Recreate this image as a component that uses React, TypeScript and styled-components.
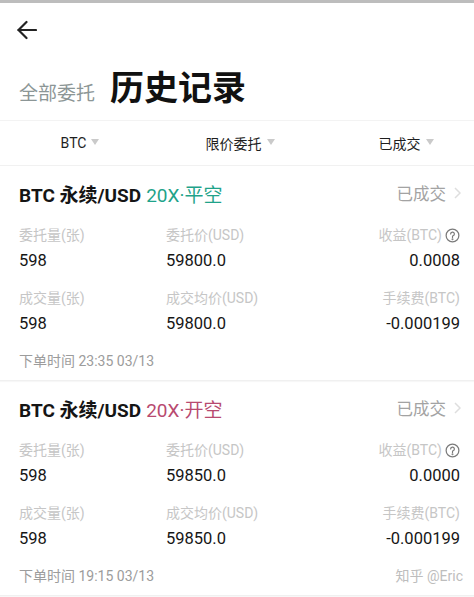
import React from 'react';
import styled, { createGlobalStyle } from 'styled-components';

const GlobalStyle = createGlobalStyle`
    html, body {
        margin: 0;
        padding: 0;
        background: #ffffff;
    }
    body {
        font-family: "Roboto", "Noto Sans CJK SC", sans-serif;
        color: #1a1a1a;
        width: 474px;
        height: 597px;
        overflow: hidden;
    }
`;

interface Order {
    pair: string;
    tag: string;
    side: 'close' | 'open';
    amount: string;
    price: string;
    pnl: string;
    filled: string;
    avgPrice: string;
    fee: string;
    time: string;
}

const orders: Order[] = [
    {
        pair: 'BTC 永续/USD',
        tag: '20X·平空',
        side: 'close',
        amount: '598',
        price: '59800.0',
        pnl: '0.0008',
        filled: '598',
        avgPrice: '59800.0',
        fee: '-0.000199',
        time: '23:35 03/13',
    },
    {
        pair: 'BTC 永续/USD',
        tag: '20X·开空',
        side: 'open',
        amount: '598',
        price: '59850.0',
        pnl: '0.0000',
        filled: '598',
        avgPrice: '59850.0',
        fee: '-0.000199',
        time: '19:15 03/13',
    },
];

const Page = styled.div`
    display: flex;
    flex-direction: column;
    width: 474px;
    border-top: 3px solid #bdbdbd;
    box-sizing: border-box;

    & > * {
        flex-shrink: 0;
    }
`;

const TopBar = styled.div`
    height: 54px;
    display: flex;
    align-items: center;
    padding-left: 17px;
`;

const BackButton = styled.button`
    border: none;
    background: none;
    padding: 0;
    display: flex;
    color: #222;
    cursor: pointer;
`;

const Tabs = styled.div`
    height: 63px;
    display: flex;
    align-items: flex-end;
    gap: 15px;
    padding: 0 0 11px 19px;
    box-sizing: border-box;
`;

const Tab = styled.span<{ $active?: boolean }>`
    font-size: ${(p) => (p.$active ? '34px' : '19px')};
    font-weight: ${(p) => (p.$active ? 700 : 400)};
    color: ${(p) => (p.$active ? '#111' : '#8c9696')};
    line-height: 1.2;
    margin-bottom: ${(p) => (p.$active ? '0' : '3px')};
`;

const FilterBar = styled.div`
    height: 44px;
    display: grid;
    grid-template-columns: 160px 160px 1fr;
    align-items: center;
    border-top: 1px solid #f3f3f3;
    border-bottom: 1px solid #f1f1f1;
`;

const Filter = styled.div<{ $shift?: number }>`
    display: flex;
    align-items: center;
    justify-content: center;
    gap: 5px;
    font-size: 14px;
    color: #1e1e1e;
    padding-left: ${(p) => p.$shift ?? 0}px;
`;

const Caret = styled.span`
    width: 0;
    height: 0;
    border-left: 4.5px solid transparent;
    border-right: 4.5px solid transparent;
    border-top: 6px solid #cacaca;
    margin-top: -2px;
`;

const Card = styled.div`
    padding: 15px 14px 9px 19px;
    border-bottom: 1px solid #f0f0f0;
    box-shadow: 0 1px 1px #f7f7f7;
`;

const CardHead = styled.div`
    display: flex;
    align-items: center;
    justify-content: space-between;
    height: 24px;
`;

const Pair = styled.div`
    font-size: 19px;
    font-weight: 700;
    color: #151515;
`;

const Tag = styled.span<{ $side: 'close' | 'open' }>`
    font-weight: 400;
    margin-left: 5px;
    color: ${(p) => (p.$side === 'close' ? '#1fa38a' : '#b84a70')};
`;

const Status = styled.div`
    display: flex;
    align-items: center;
    gap: 8px;
    font-size: 16.5px;
    color: #a3a3a3;
    margin-right: -1px;
`;

const Stats = styled.div`
    display: grid;
    grid-template-columns: 147px 1fr auto;
    margin-top: 20px;
    row-gap: 5px;
`;

const Label = styled.div<{ $right?: boolean }>`
    font-size: 14px;
    line-height: 20px;
    color: #c6c6c6;
    display: flex;
    align-items: center;
    justify-content: ${(p) => (p.$right ? 'flex-end' : 'flex-start')};
    gap: 3px;
`;

const Value = styled.div<{ $right?: boolean }>`
    font-size: 16.5px;
    line-height: 22px;
    color: #161616;
    text-align: ${(p) => (p.$right ? 'right' : 'left')};
`;

const Gap = styled.div`
    grid-column: 1 / -1;
    height: 6px;
`;

const Footer = styled.div`
    display: flex;
    justify-content: space-between;
    align-items: center;
    margin-top: 16px;
    font-size: 14px;
    line-height: 20px;
    color: #9c9c9c;
`;

const Watermark = styled.span`
    color: #bdbdbd;
    margin-right: -3px;
`;

const BackArrow = () => (
    <svg width="20" height="20" viewBox="0 0 20 20" fill="none" stroke="currentColor" strokeWidth="2.2" strokeLinecap="round" strokeLinejoin="round">
        <path d="M19 10H1.5" />
        <path d="M9.5 2L1.5 10L9.5 18" />
    </svg>
);

const Chevron = () => (
    <svg width="7" height="12" viewBox="0 0 7 12" fill="none" stroke="#dedede" strokeWidth="1.5">
        <path d="M1 1l5 5-5 5" />
    </svg>
);

const HelpIcon = () => (
    <svg width="15" height="15" viewBox="0 0 16 16" fill="none" stroke="#7a7a7a" strokeWidth="1.3" strokeLinecap="round">
        <circle cx="8" cy="8" r="6.8" />
        <path d="M6 6.3a2 2 0 1 1 2.6 1.9c-.4.2-.6.5-.6 1V10" />
        <circle cx="8" cy="12" r="0.4" fill="#7a7a7a" />
    </svg>
);

const OrderCard: React.FC<{ order: Order; last?: boolean }> = ({ order, last }) => (
    <Card>
        <CardHead>
            <Pair>
                {order.pair}
                <Tag $side={order.side}>{order.tag}</Tag>
            </Pair>
            <Status>
                已成交
                <Chevron />
            </Status>
        </CardHead>
        <Stats>
            <Label>委托量(张)</Label>
            <Label>委托价(USD)</Label>
            <Label $right>
                收益(BTC)
                <HelpIcon />
            </Label>
            <Value>{order.amount}</Value>
            <Value>{order.price}</Value>
            <Value $right>{order.pnl}</Value>
            <Gap />
            <Label>成交量(张)</Label>
            <Label>成交均价(USD)</Label>
            <Label $right>手续费(BTC)</Label>
            <Value>{order.filled}</Value>
            <Value>{order.avgPrice}</Value>
            <Value $right>{order.fee}</Value>
        </Stats>
        <Footer>
            <span>下单时间 {order.time}</span>
            {last && <Watermark>知乎 @Eric</Watermark>}
        </Footer>
    </Card>
);

export default function App() {
    return (
        <>
            <GlobalStyle />
            <Page>
                <TopBar>
                    <BackButton>
                        <BackArrow />
                    </BackButton>
                </TopBar>
                <Tabs>
                    <Tab>全部委托</Tab>
                    <Tab $active>历史记录</Tab>
                </Tabs>
                <FilterBar>
                    <Filter>
                        BTC
                        <Caret />
                    </Filter>
                    <Filter>
                        限价委托
                        <Caret />
                    </Filter>
                    <Filter $shift={18}>
                        已成交
                        <Caret />
                    </Filter>
                </FilterBar>
                {orders.map((order, i) => (
                    <OrderCard key={i} order={order} last={i === orders.length - 1} />
                ))}
            </Page>
        </>
    );
}
